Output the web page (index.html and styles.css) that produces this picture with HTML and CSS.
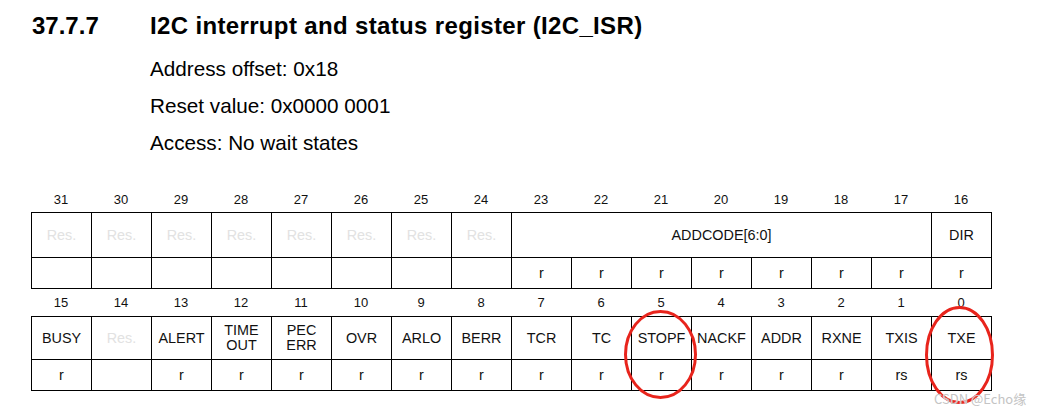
FILE: index.html
```html
<!DOCTYPE html>
<html lang="en">
<head>
<meta charset="utf-8">
<title>I2C_ISR</title>
<link rel="stylesheet" href="styles.css">
</head>
<body>
<div class="page">
  <h1 class="heading"><span class="num">37.7.7</span><span class="title">I2C interrupt and status register (I2C_ISR)</span></h1>
  <div class="meta">
    <p>Address offset: 0x18</p>
    <p>Reset value: 0x0000 0001</p>
    <p>Access: No wait states</p>
  </div>

  <div class="reg reg-high">
    <div class="bits">
      <span>31</span><span>30</span><span>29</span><span>28</span><span>27</span><span>26</span><span>25</span><span>24</span>
      <span>23</span><span>22</span><span>21</span><span>20</span><span>19</span><span>18</span><span>17</span><span>16</span>
    </div>
    <div class="box">
      <div class="c res">Res.</div><div class="c res">Res.</div><div class="c res">Res.</div><div class="c res">Res.</div>
      <div class="c res">Res.</div><div class="c res">Res.</div><div class="c res">Res.</div><div class="c res">Res.</div>
      <div class="c span7">ADDCODE[6:0]</div>
      <div class="c">DIR</div>
      <div class="a"></div><div class="a"></div><div class="a"></div><div class="a"></div>
      <div class="a"></div><div class="a"></div><div class="a"></div><div class="a"></div>
      <div class="a">r</div><div class="a">r</div><div class="a">r</div><div class="a">r</div>
      <div class="a">r</div><div class="a">r</div><div class="a">r</div><div class="a">r</div>
    </div>
  </div>

  <div class="reg reg-low">
    <div class="bits">
      <span>15</span><span>14</span><span>13</span><span>12</span><span>11</span><span>10</span><span>9</span><span>8</span>
      <span>7</span><span>6</span><span>5</span><span>4</span><span>3</span><span>2</span><span>1</span><span>0</span>
    </div>
    <div class="box">
      <div class="c">BUSY</div><div class="c res">Res.</div><div class="c">ALERT</div><div class="c">TIME<br>OUT</div>
      <div class="c">PEC<br>ERR</div><div class="c">OVR</div><div class="c">ARLO</div><div class="c">BERR</div>
      <div class="c">TCR</div><div class="c">TC</div><div class="c">STOPF</div><div class="c">NACKF</div>
      <div class="c">ADDR</div><div class="c">RXNE</div><div class="c">TXIS</div><div class="c">TXE</div>
      <div class="a">r</div><div class="a"></div><div class="a">r</div><div class="a">r</div>
      <div class="a">r</div><div class="a">r</div><div class="a">r</div><div class="a">r</div>
      <div class="a">r</div><div class="a">r</div><div class="a">r</div><div class="a">r</div>
      <div class="a">r</div><div class="a">r</div><div class="a">rs</div><div class="a">rs</div>
    </div>
  </div>
</div>

<svg class="marks" width="1040" height="414" viewBox="0 0 1040 414" aria-hidden="true">
  <ellipse cx="660.5" cy="354.5" rx="35" ry="43" fill="none" stroke="#e8241c" stroke-width="3"/>
  <ellipse cx="959.5" cy="355" rx="33" ry="47.5" fill="none" stroke="#e8241c" stroke-width="3"/>
</svg>
<div class="watermark">CSDN @Echo缘</div>
</body>
</html>
```

FILE: styles.css
```css
html, body {
  margin: 0;
  padding: 0;
  background: #ffffff;
}

body {
  width: 1040px;
  height: 414px;
  overflow: hidden;
  position: relative;
  font-family: "Liberation Sans", Arial, sans-serif;
  color: #000;
}

.page {
  padding: 12px 0 0 32px;
}

.heading {
  display: flex;
  margin: 0;
  font-size: 24px;
  line-height: 28px;
  font-weight: bold;
}

.heading .num {
  width: 118px;
  flex: none;
}

.heading .title {
  letter-spacing: 0.35px;
}

.meta {
  margin: 10px 0 0 118px;
  font-size: 20.7px;
  line-height: 37px;
}

.meta p {
  margin: 0;
}

.reg {
  margin-left: -1px;
  width: 961px;
}

.reg-high {
  margin-top: 27px;
}

.bits {
  display: grid;
  grid-template-columns: repeat(16, 60px);
  font-size: 13px;
  color: #111;
}

.bits span {
  text-align: center;
}

.reg-high .bits {
  height: 24px;
  line-height: 24px;
}

.reg-low .bits {
  height: 27px;
  line-height: 27px;
}

.box {
  display: grid;
  grid-template-columns: repeat(16, 59px);
  gap: 1px;
  padding: 1px;
  background: #000;
  font-size: 14.4px;
  color: #111;
}

.reg-high .box {
  grid-template-rows: 44px 30px;
}

.reg-low .box {
  grid-template-rows: 42px 30px;
}

.c, .a {
  background: #fff;
  display: flex;
  align-items: center;
  justify-content: center;
  text-align: center;
  line-height: 15px;
  white-space: nowrap;
}

.span7 {
  grid-column: span 7;
}

.res {
  color: #e2e2e2;
}

.marks {
  position: absolute;
  left: 0;
  top: 0;
  pointer-events: none;
}

.watermark {
  position: absolute;
  left: 934px;
  top: 391px;
  font-family: "Noto Sans CJK SC", "Liberation Sans", sans-serif;
  font-size: 13px;
  line-height: 16px;
  color: #c4c4c4;
  text-shadow: 0 0 1px #ffffff;
}
```
